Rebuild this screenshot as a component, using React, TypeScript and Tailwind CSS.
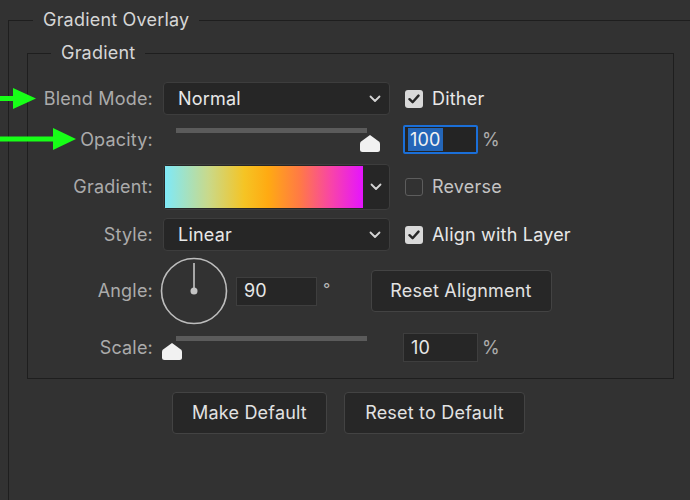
import React from "react";

const font = { fontFamily: "Inter, 'Noto Sans', sans-serif" };

function Chevron() {
  return (
    <svg width="12" height="8" viewBox="0 0 12 8" className="block shrink-0">
      <path d="M1.5 1.5 L6 6 L10.5 1.5" fill="none" stroke="#d4d4d4" strokeWidth="1.8" strokeLinecap="round" strokeLinejoin="round" />
    </svg>
  );
}

function Check({ on }: { on: boolean }) {
  if (!on) {
    return <span className="ml-[2px] h-[18px] w-[18px] shrink-0 rounded-[3px] border-[1.5px] border-[#5d5d5d]" />;
  }
  return (
    <span className="ml-[2px] flex h-[18px] w-[18px] shrink-0 items-center justify-center rounded-[3px] bg-[#d9d9d9]">
      <svg width="12" height="10" viewBox="0 0 12 10" className="block">
        <path d="M1.5 5.2 L4.6 8.2 L10.5 1.6" fill="none" stroke="#262626" strokeWidth="2.4" strokeLinecap="round" strokeLinejoin="round" />
      </svg>
    </span>
  );
}

function Thumb() {
  return (
    <svg width="20" height="17" viewBox="0 0 20 17" className="block">
      <path d="M10 0 L18.9 6.6 Q20 7.6 20 9 L20 14.5 Q20 17 17.5 17 L2.5 17 Q0 17 0 14.5 L0 9 Q0 7.6 1.1 6.6 Z" fill="#f1f1f1" />
    </svg>
  );
}

function Slider({ at }: { at: number }) {
  return (
    <div className="relative h-[29px] w-[227px] shrink-0">
      <div className="ml-[13px] mt-[6px] h-[5px] w-[191px] bg-[#5b5b5b]" />
      <div className="absolute top-[7px]" style={{ left: at }}>
        <Thumb />
      </div>
    </div>
  );
}

function Select({ value }: { value: string }) {
  return (
    <div className="flex h-[33px] w-[227px] shrink-0 items-center justify-between rounded-[4px] border border-[#3d3d3d] bg-[#262626] pl-[14px] pr-[8px] text-[#e8e8e8]">
      <span>{value}</span>
      <Chevron />
    </div>
  );
}

function Label({ children }: { children: React.ReactNode }) {
  return <div className="w-[125px] shrink-0 text-right text-[#ababab]">{children}</div>;
}

function Field({ value, w, focus }: { value: string; w: string; focus?: boolean }) {
  if (focus) {
    return (
      <div className="flex h-[29px] w-[75px] shrink-0 items-center rounded-[2px] border-2 border-[#1b6fd8] bg-[#242424] pl-[3px]">
        <span className="bg-[#2466b8] px-[2px] leading-[23px] text-[#f2f2f2]">{value}</span>
      </div>
    );
  }
  return (
    <div className={`flex h-[29px] ${w} shrink-0 items-center border border-[#3e3e3e] bg-[#262626] pl-[7px] text-[#e8e8e8]`}>
      {value}
    </div>
  );
}

function Button({ children, w }: { children: React.ReactNode; w: string }) {
  return (
    <div className={`flex h-[42px] ${w} shrink-0 items-center justify-center rounded-[4px] border border-[#434343] bg-[#272727] text-[#e2e2e2]`}>
      {children}
    </div>
  );
}

export default function App() {
  return (
    <div className="relative h-[500px] w-[690px] overflow-hidden bg-[#323232] pl-[8px] pt-[8px] text-[18px] leading-[24px] tracking-[0.2px]" style={font}>
      <fieldset className="h-[560px] w-[740px] border border-[#1e1e1e]">
        <legend className="ml-[24px] px-[10px] text-[#d6d6d6]">Gradient Overlay</legend>

        <fieldset className="ml-[18px] mt-[9px] w-[647px] border border-[#1e1e1e] pb-[13px]">
          <legend className="ml-[23px] px-[10px] text-[#d6d6d6]">Gradient</legend>

          {/* Blend Mode */}
          <div className="mt-[17px] flex items-center">
            <Label>Blend Mode:</Label>
            <div className="ml-[10px]"><Select value="Normal" /></div>
            <div className="ml-[13px] flex items-center gap-[9px] text-[#e8e8e8]">
              <Check on />
              <span>Dither</span>
            </div>
          </div>

          {/* Opacity */}
          <div className="mt-[7px] flex items-center">
            <Label>Opacity:</Label>
            <div className="ml-[10px]"><Slider at={197} /></div>
            <div className="ml-[13px] flex items-center gap-[4px] text-[#adadad]">
              <Field value="100" w="w-[75px]" focus />
              <span>%</span>
            </div>
          </div>

          {/* Gradient */}
          <div className="mt-[7px] flex items-center">
            <Label>Gradient:</Label>
            <div className="ml-[10px] flex h-[46px] w-[227px] shrink-0 items-stretch rounded-[4px] border border-[#3d3d3d] bg-[#262626] p-[1px]">
              <div className="w-[198px] bg-[linear-gradient(90deg,#7fe9f8_0%,#c9d98a_22%,#f5c424_40%,#ffaa12_52%,#ff7a45_68%,#f844a8_84%,#e514ff_100%)]" />
              <div className="flex flex-1 items-center justify-center"><Chevron /></div>
            </div>
            <div className="ml-[13px] flex items-center gap-[9px] text-[#c4c4c4]">
              <Check on={false} />
              <span>Reverse</span>
            </div>
          </div>

          {/* Style */}
          <div className="mt-[8px] flex items-center">
            <Label>Style:</Label>
            <div className="ml-[10px]"><Select value="Linear" /></div>
            <div className="ml-[13px] flex items-center gap-[9px] text-[#e8e8e8]">
              <Check on />
              <span>Align with Layer</span>
            </div>
          </div>

          {/* Angle */}
          <div className="mt-[6px] flex items-center">
            <Label>Angle:</Label>
            <svg width="68" height="68" viewBox="0 0 68 68" className="ml-[7px] block shrink-0">
              <circle cx="34" cy="34" r="32.5" fill="none" stroke="#bdbdbd" strokeWidth="1.6" />
              <line x1="34" y1="6" x2="34" y2="34" stroke="#c4c4c4" strokeWidth="1.6" />
              <circle cx="34" cy="34" r="3.5" fill="#c4c4c4" />
            </svg>
            <div className="ml-[8px]"><Field value="90" w="w-[81px]" /></div>
            <span className="ml-[6px] -mt-[4px] text-[16px] leading-[16px] text-[#b8b8b8]">°</span>
            <div className="ml-[40px]"><Button w="w-[181px]">Reset Alignment</Button></div>
          </div>

          {/* Scale */}
          <div className="mt-[5px] flex items-center">
            <Label>Scale:</Label>
            <div className="ml-[10px]"><Slider at={-1} /></div>
            <div className="ml-[13px] flex items-center gap-[4px] text-[#adadad]">
              <Field value="10" w="w-[75px]" />
              <span>%</span>
            </div>
          </div>
        </fieldset>

        <div className="mt-[13px] flex w-[679px] justify-center gap-[17px]">
          <Button w="w-[155px]">Make Default</Button>
          <Button w="w-[181px]">Reset to Default</Button>
        </div>
      </fieldset>

      {/* annotation arrows */}
      <svg width="80" height="160" viewBox="0 0 80 160" className="absolute left-0 top-0">
        <rect x="0" y="96" width="15" height="5" fill="#17ff17" />
        <polygon points="13,88 36,98.5 13,109" fill="#17ff17" />
        <rect x="0" y="136.5" width="55" height="5" fill="#17ff17" />
        <polygon points="53,128 76,139 53,150" fill="#17ff17" />
      </svg>
    </div>
  );
}
